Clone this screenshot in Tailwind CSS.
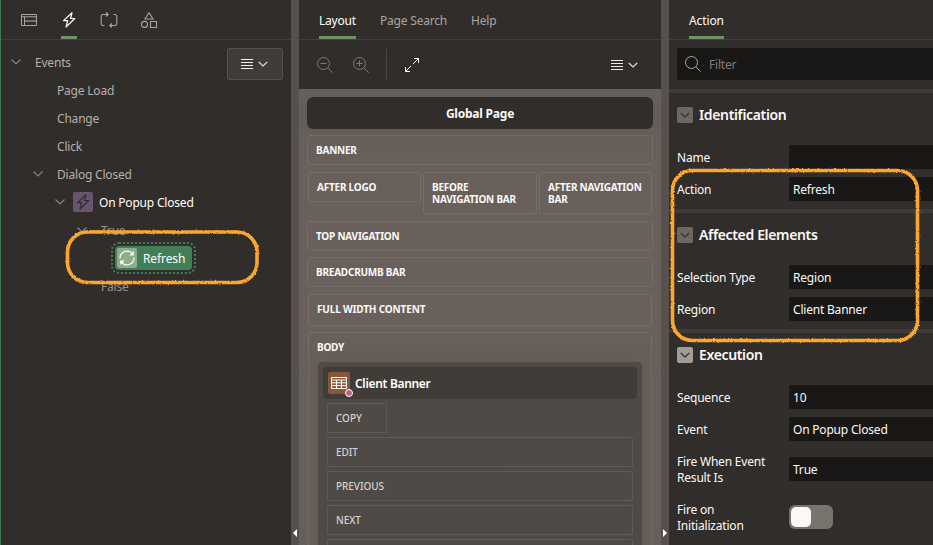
<!DOCTYPE html>
<html lang="en">
<head>
<meta charset="utf-8">
<title>Page Designer</title>
<script src="https://cdn.jsdelivr.net/npm/@tailwindcss/browser@4"></script>
</head>
<body class="relative flex h-[545px] w-[933px] overflow-hidden bg-[#312d2a] font-['Noto_Sans',sans-serif] text-[12px] leading-4 tracking-[-0.2px] text-[#fbf9f8]">

<!-- Dynamic action tree -->
<aside class="flex w-[291px] shrink-0 flex-col border-l border-[#3d7a52]">
  <nav class="flex h-10 shrink-0 gap-6 border-b border-[#413d39] pl-5 text-[#aaa5a0]">
    <div class="flex h-10 w-4 items-center"><svg class="h-4 w-4 overflow-visible" viewBox="0 0 16 16" fill="none" stroke="currentColor"><path d="M.5 2.500h15v11H.5zM.5 4.800h15M3.500 4.800v8.700"/><path d="M4 9h11" stroke="#77726d" stroke-width="2"/></svg></div>
    <div class="flex h-[39px] w-4 flex-col border-b-3 border-[#6b9464] pt-3 text-white"><svg class="h-4 w-4 overflow-visible" viewBox="0 0 16 16" fill="none" stroke="currentColor" stroke-width="1.200" stroke-linejoin="round"><path d="M11 .8 2.500 8.600h4.200L5 15l8.800-8.500H9.600z"/></svg></div>
    <div class="flex h-10 w-4 items-center"><svg class="h-4 w-4 overflow-visible" viewBox="0 0 16 16" fill="none" stroke="currentColor" stroke-width="1.100"><path d="M3.500 13.500H2A1.800 1.800 0 0 1 .2 11.700V4.300A1.800 1.800 0 0 1 2 2.500H7M5 .500l2.200 2L5 4.500M12.500 2.500H14a1.800 1.800 0 0 1 1.800 1.800v7.400a1.800 1.800 0 0 1-1.800 1.800H9M11 11.500l-2.200 2 2.200 2"/></svg></div>
    <div class="flex h-10 w-4 items-center"><svg class="h-4 w-4 overflow-visible" viewBox="0 0 16 16" fill="none" stroke="currentColor" stroke-width="1.100"><path d="M8 .8 12 7H4zM9.500 9.500h6v6h-6z"/><circle cx="3.500" cy="12.400" r="3"/></svg></div>
  </nav>
  <div class="flex justify-between pr-2">
    <ul class="flex flex-col pt-2 text-[#b5b0ac]">
      <li class="flex h-7 items-center pl-[10px]"><svg class="mr-[14px] h-[10px] w-[10px]" viewBox="0 0 10 10" fill="none" stroke="#8a8581" stroke-width="1.100"><path d="M.5 2.500 5 7l4.500-4.500"/></svg><span class="pt-[2px]">Events</span></li>
      <li class="flex h-7 items-center pt-[2px] pl-14">Page Load</li>
      <li class="flex h-7 items-center pt-[2px] pl-14">Change</li>
      <li class="flex h-7 items-center pt-[2px] pl-14">Click</li>
      <li class="flex h-7 items-center pl-8"><svg class="mr-[14px] h-[10px] w-[10px]" viewBox="0 0 10 10" fill="none" stroke="#8a8581" stroke-width="1.100"><path d="M.5 2.500 5 7l4.500-4.500"/></svg><span class="pt-[2px]">Dialog Closed</span></li>
      <li class="flex h-7 items-center pl-[54px] text-white"><svg class="mr-2 h-[10px] w-[10px]" viewBox="0 0 10 10" fill="none" stroke="#8a8581" stroke-width="1.100"><path d="M.5 2.500 5 7l4.500-4.500"/></svg><span class="mr-[6px] flex h-5 w-5 items-center justify-center rounded-[2px] bg-[#68556b]"><svg class="h-4 w-4" viewBox="0 0 16 16" fill="none" stroke="#312b33" stroke-width="1.200" stroke-linejoin="round"><path d="M11 .8 2.500 8.600h4.200L5 15l8.800-8.500H9.600z"/></svg></span><span class="pt-[2px]">On Popup Closed</span></li>
      <li class="flex h-7 items-center pl-[76px] text-[#96918d]"><svg class="mr-[14px] h-[10px] w-[10px]" viewBox="0 0 10 10" fill="none" stroke="#8a8581" stroke-width="1.100"><path d="M.5 2.500 5 7l4.500-4.500"/></svg><span class="pt-[2px]">True</span></li>
      <li class="flex h-7 items-center pl-[114px] text-white"><span class="flex h-6 w-[77px] items-center rounded-[4px] bg-[#427e57] pl-[2px] outline-2 outline-offset-2 outline-dotted outline-[#427e57]"><span class="mr-[6px] flex h-5 w-5 items-center justify-center rounded-[2px] bg-[#8dae88]"><svg class="h-4 w-4 overflow-visible" viewBox="0 0 16 16" fill="none" stroke="white" stroke-width="1.200"><path d="M1 8.500A7 7 0 0 1 14 4.600M15 7.500A7 7 0 0 1 2 11.400"/><path d="M14.800 1v4.500h-4.500zM1.200 15v-4.500h4.500z" fill="white" stroke="none"/></svg></span><span class="pt-[2px] tracking-[-0.1px]">Refresh</span></span></li>
      <li class="flex h-7 items-center pt-[2px] pl-[100px] text-[#96918d]">False</li>
    </ul>
    <button class="mt-2 flex h-8 w-14 items-center gap-[5px] rounded-[2px] border border-[#56514d] bg-[#403c38] pl-[13px]"><svg class="h-3 w-3" viewBox="0 0 12 12" stroke="#f1efed"><path d="M0 1.500h12M0 4.500h12M0 7.500h12M0 10.500h12"/></svg><svg class="h-[10px] w-[10px]" viewBox="0 0 10 10" fill="none" stroke="#e0dddb" stroke-width="1.200"><path d="M.8 3 5 7l4.200-4"/></svg></button>
  </div>
</aside>

<div class="flex w-2 shrink-0 flex-col bg-[#56514d] pt-[529px]"><svg class="h-2 w-2" viewBox="0 0 8 8" fill="#fff"><path d="M6 0v8L2 4z"/></svg></div>

<!-- Layout canvas -->
<main class="flex w-[362px] shrink-0 flex-col">
  <nav class="flex h-10 shrink-0 gap-6 border-b border-[#413d39] pl-5 text-[#aaa5a0]">
    <div class="h-[39px] w-[37px] border-b-3 border-[#6b9464] pt-[13px] whitespace-nowrap text-white">Layout</div>
    <div class="w-[67px] pt-[13px] whitespace-nowrap">Page Search</div>
    <div class="pt-[13px]">Help</div>
  </nav>
  <div class="flex h-[49px] shrink-0 items-center pl-[18px] text-[#807a76]">
    <svg class="mr-5 h-4 w-4" viewBox="0 0 16 16" fill="none" stroke="currentColor"><circle cx="6.500" cy="6.500" r="6"/><path d="M3.500 6.500h6M10.800 10.800 15.700 15.700"/></svg>
    <svg class="h-4 w-4" viewBox="0 0 16 16" fill="none" stroke="currentColor"><circle cx="6.500" cy="6.500" r="6"/><path d="M3.500 6.500h6M6.500 3.500v6M10.800 10.800 15.700 15.700"/></svg>
    <div class="ml-[17px] h-8 w-px bg-[#4a4642]"></div>
    <svg class="ml-[17px] h-4 w-4" viewBox="0 0 16 16" fill="none" stroke="#fff"><path d="M10 1.500h4.500V6M14.500 1.500 9 7M1.500 10v4.500H6M1.500 14.500 7 9"/></svg>
    <svg class="ml-[191px] h-3 w-3" viewBox="0 0 12 12" stroke="#f1efed"><path d="M0 1.500h12M0 4.500h12M0 7.500h12M0 10.500h12"/></svg>
    <svg class="ml-[5px] h-[10px] w-[10px]" viewBox="0 0 10 10" fill="none" stroke="#e0dddb" stroke-width="1.200"><path d="M.8 3 5 7l4.200-4"/></svg>
  </div>
  <div class="flex min-h-0 grow flex-col overflow-hidden bg-[#69605c] px-2 pt-2 text-[10px] leading-3 font-bold tracking-[-0.22px]">
    <h1 class="flex h-8 shrink-0 items-center justify-center rounded-[6px] bg-[#312d2a] pt-[2px] text-[12px] shadow-[0_4px_24px_2px_rgba(85,88,78,0.4)]">Global Page</h1>
    <div class="mt-[6px] flex h-[30px] shrink-0 items-center rounded-[4px] border border-dotted border-[#817973] pl-2">BANNER</div>
    <div class="mx-px mt-[7px] flex h-[42px] shrink-0 items-start gap-[2px]">
      <div class="h-[30px] w-[113px] rounded-[3px] border border-dotted border-[#817973] pt-2 pl-2">AFTER LOGO</div>
      <div class="h-[42px] w-[114px] rounded-[3px] border border-dotted border-[#817973] pt-2 pl-2">BEFORE<br>NAVIGATION BAR</div>
      <div class="h-[42px] w-[113px] rounded-[3px] border border-dotted border-[#817973] pt-2 pl-2 whitespace-nowrap">AFTER NAVIGATION<br>BAR</div>
    </div>
    <div class="mt-[7px] flex h-[30px] shrink-0 items-center rounded-[4px] border border-dotted border-[#817973] pl-2">TOP NAVIGATION</div>
    <div class="mt-[6px] flex h-[30px] shrink-0 items-center rounded-[4px] border border-dotted border-[#817973] pl-2">BREADCRUMB BAR</div>
    <div class="mx-px mt-[7px] h-8 shrink-0 rounded-[3px] border border-dotted border-[#817973] pt-2 pl-2 tracking-[-0.15px]">FULL WIDTH CONTENT</div>
    <div class="mx-px mt-[6px] h-[260px] shrink-0 rounded-[3px] border border-dotted border-[#817973] px-[9px] pt-2">
      <div class="-ml-px">BODY</div>
      <section class="mt-[9px] flex h-[240px] flex-col rounded-[4px] bg-[#4f4a46] px-[5px] pt-[5px] font-medium tracking-[-0.05px] text-[#d5d1ce] shadow-[0_0_18px_3px_rgba(85,84,76,0.5)]">
        <h2 class="flex h-8 items-center rounded-[4px] bg-[#403c38] pl-[5px] text-[12px] font-semibold tracking-[-0.32px] text-white">
          <span class="relative mr-[5px] flex h-[22px] w-[22px] items-center justify-center rounded-[2px] bg-[#8a5638]"><svg class="h-4 w-4" viewBox="0 0 16 16" fill="none" stroke="white"><path d="M.5 2.500h15v11H.5zM.5 5h15M.5 7.800h15M.5 10.600h15M5.500 5v8.500M10.500 5v8.500"/></svg><span class="absolute -right-[3px] -bottom-[3px] h-2 w-2 rounded-full border border-white bg-[#c06078]"></span></span><span class="pt-[2px]">Client Banner</span></h2>
        <div class="mr-1 ml-1 flex flex-col gap-1 pt-1">
          <div class="flex h-[30px] w-[60px] shrink-0 items-center rounded-[2px] border border-dotted border-[#716b66] pl-2">COPY</div>
          <div class="flex h-[30px] shrink-0 items-center rounded-[2px] border border-dotted border-[#716b66] pl-2">EDIT</div>
          <div class="flex h-[30px] shrink-0 items-center rounded-[2px] border border-dotted border-[#716b66] pl-2">PREVIOUS</div>
          <div class="flex h-[30px] shrink-0 items-center rounded-[2px] border border-dotted border-[#716b66] pl-2">NEXT</div>
          <div class="h-[30px] shrink-0 rounded-[2px] border border-dotted border-[#716b66]"></div>
        </div>
      </section>
    </div>
  </div>
</main>

<div class="flex w-2 shrink-0 flex-col bg-[#56514d] pt-[529px]"><svg class="h-2 w-2" viewBox="0 0 8 8" fill="#fff"><path d="M2 0v8l4-4z"/></svg></div>

<!-- Property editor -->
<aside class="flex w-[264px] shrink-0 flex-col">
  <nav class="h-10 shrink-0 border-b border-[#413d39] pl-5 text-white"><div class="h-[39px] w-[35px] border-b-3 border-[#6b9464] pt-[13px] tracking-[-0.1px]">Action</div></nav>
  <div class="pt-2 pb-[9px] pl-2"><div class="flex h-8 items-center rounded-l-[2px] bg-[#191816] pl-2 text-[#827d79]"><svg class="mr-2 h-4 w-4" viewBox="0 0 16 16" fill="none" stroke="#aaa5a0"><circle cx="6.500" cy="6.500" r="6"/><path d="M10.800 10.800 15.700 15.700"/></svg><span class="pt-[2px]">Filter</span></div></div>
  <section class="h-[120px] shrink-0 border-t-4 border-[#3f3b38] pl-2">
    <h2 class="flex h-[44px] items-center text-[14px] font-semibold tracking-[-0.35px]"><span class="mr-[6px] flex h-4 w-4 items-center justify-center rounded-[2px] bg-[#6d6762]"><svg class="h-[10px] w-[10px]" viewBox="0 0 10 10" fill="none" stroke="#393532" stroke-width="1.300"><path d="M.8 3 5 7l4.200-4"/></svg></span>Identification</h2>
    <div class="flex flex-col gap-2 pt-2">
      <div class="flex h-6 items-center"><div class="w-28 pt-[2px]">Name</div><div class="h-6 grow rounded-l-[2px] bg-[#191816]"></div></div>
      <div class="flex h-6 items-center"><div class="w-28 pt-[2px]">Action</div><div class="flex h-6 grow items-center rounded-l-[2px] bg-[#191816] pt-[2px] pl-1">Refresh</div></div>
    </div>
  </section>
  <section class="h-[120px] shrink-0 border-t-4 border-[#3f3b38] pl-2">
    <h2 class="flex h-[44px] items-center text-[14px] font-semibold tracking-[-0.35px]"><span class="mr-[6px] flex h-4 w-4 items-center justify-center rounded-[2px] bg-[#6d6762]"><svg class="h-[10px] w-[10px]" viewBox="0 0 10 10" fill="none" stroke="#393532" stroke-width="1.300"><path d="M.8 3 5 7l4.200-4"/></svg></span>Affected Elements</h2>
    <div class="flex flex-col gap-2 pt-2">
      <div class="flex h-6 items-center"><div class="w-28 pt-[2px]">Selection Type</div><div class="flex h-6 grow items-center rounded-l-[2px] bg-[#191816] pt-[2px] pl-1">Region</div></div>
      <div class="flex h-6 items-center"><div class="w-28 pt-[2px]">Region</div><div class="flex h-6 grow items-center rounded-l-[2px] bg-[#191816] pt-[2px] pl-1">Client Banner</div></div>
    </div>
  </section>
  <section class="shrink-0 border-t-4 border-[#3f3b38] pl-2">
    <h2 class="flex h-[44px] items-center text-[14px] font-semibold tracking-[-0.35px]"><span class="mr-[6px] flex h-4 w-4 items-center justify-center rounded-[2px] bg-[#a19c96]"><svg class="h-[10px] w-[10px]" viewBox="0 0 10 10" fill="none" stroke="#393532" stroke-width="1.300"><path d="M.8 3 5 7l4.200-4"/></svg></span>Execution</h2>
    <div class="flex flex-col pt-2">
      <div class="flex h-6 items-center"><div class="w-28 pt-[2px]">Sequence</div><div class="flex h-6 grow items-center rounded-l-[2px] bg-[#191816] pt-[2px] pl-1">10</div></div>
      <div class="mt-2 flex h-6 items-center"><div class="w-28 pt-[2px]">Event</div><div class="flex h-6 grow items-center rounded-l-[2px] bg-[#191816] pt-[2px] pl-1">On Popup Closed</div></div>
      <div class="mt-2 flex h-10 items-center"><div class="w-28 pt-[2px]">Fire When Event<br>Result Is</div><div class="flex h-6 grow items-center rounded-l-[2px] bg-[#191816] pt-[2px] pl-1">True</div></div>
      <div class="mt-2 flex h-10 items-center"><div class="w-28 pt-[2px]">Fire on<br>Initialization</div><div class="flex h-6 w-11 items-center rounded-[6px] bg-[#79736e] pl-[2px]"><div class="h-5 w-5 rounded-[5px] bg-[#fbf9f8]"></div></div></div>
    </div>
  </section>
</aside>

<!-- Marker strokes drawn over the panels -->
<svg class="pointer-events-none absolute inset-0" width="933" height="545" viewBox="0 0 933 545" fill="none" stroke="#fba62f">
  <defs><filter id="rough" filterUnits="userSpaceOnUse" x="0" y="0" width="933" height="545"><feTurbulence type="fractalNoise" baseFrequency="0.6" numOctaves="2" seed="4" result="n"/><feDisplacementMap in="SourceGraphic" in2="n" scale="2.500" xChannelSelector="R" yChannelSelector="G"/></filter></defs>
  <g filter="url(#rough)" stroke-width="3.600">
    <rect x="67.500" y="232" width="189.500" height="50.500" rx="20"/>
    <rect x="672.500" y="170.500" width="245" height="170" rx="20"/>
  </g>
</svg>
</body>
</html>
